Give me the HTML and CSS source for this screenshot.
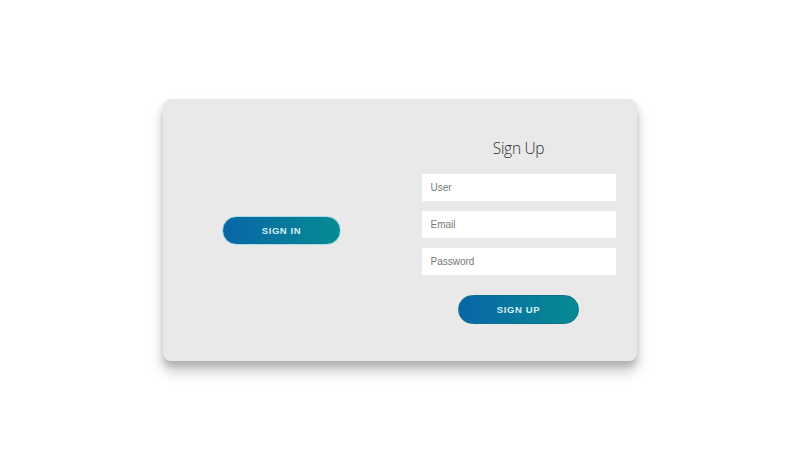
FILE: index.html
```html
<!DOCTYPE html>
<html lang="en">
<head>
<meta charset="utf-8">
<title>Sign Up</title>
<link rel="stylesheet" href="styles.css">
</head>
<body>
<div class="card">
  <div class="half left">
    <button class="btn btn-ghost" type="button">SIGN IN</button>
  </div>
  <div class="half right">
    <form class="form">
      <h1 class="title">Sign Up</h1>
      <input class="field" type="text" placeholder="User">
      <input class="field" type="email" placeholder="Email">
      <input class="field" type="password" placeholder="Password">
      <button class="btn btn-primary" type="button">SIGN UP</button>
    </form>
  </div>
</div>
</body>
</html>
```
FILE: styles.css
```css
* { box-sizing: border-box; }
html, body { margin: 0; padding: 0; background: #ffffff; }
body {
  width: 800px;
  height: 450px;
  padding-top: 99px;
  font-family: "Liberation Sans", Arial, sans-serif;
}
.card {
  width: 474px;
  height: 262px;
  margin: 0 0 0 163px;
  background: #e9e9e9;
  border-radius: 8px;
  box-shadow: 0 10px 14px rgba(0,0,0,0.22), 0 5px 6px rgba(0,0,0,0.14);
  display: flex;
}
.half {
  flex: 1 1 0;
  display: flex;
  align-items: center;
  justify-content: center;
}
.form {
  width: 194px;
  display: flex;
  flex-direction: column;
  align-items: center;
  margin-top: 1px;
}
.title {
  margin: 0 0 16px;
  font-family: "Open Sans", sans-serif;
  font-weight: 300;
  font-size: 15.5px;
  letter-spacing: -0.3px;
  line-height: 20px;
  color: #2e2e2e;
}
.field {
  width: 194px;
  height: 27px;
  border: none;
  outline: none;
  background: #fff;
  padding: 0 9px;
  margin: 0 0 10px;
  font-family: "Liberation Sans", Arial, sans-serif;
  font-size: 10px;
  color: #333;
}
.field::placeholder { color: #777; }
.btn {
  width: 119px;
  height: 29px;
  border-radius: 15px;
  font-family: "Liberation Sans", Arial, sans-serif;
  font-weight: bold;
  font-size: 9.5px;
  letter-spacing: 0.6px;
  color: #d6eef4;
  background: linear-gradient(to right, #0866a8, #078b92);
  cursor: pointer;
  padding: 0;
}
.btn-ghost {
  border: 1px solid #a9dbe8;
  margin-top: 0;
}
.btn-primary {
  width: 121px;
  border: 1px solid #0a6f8c;
  margin-top: 10px;
}
```
